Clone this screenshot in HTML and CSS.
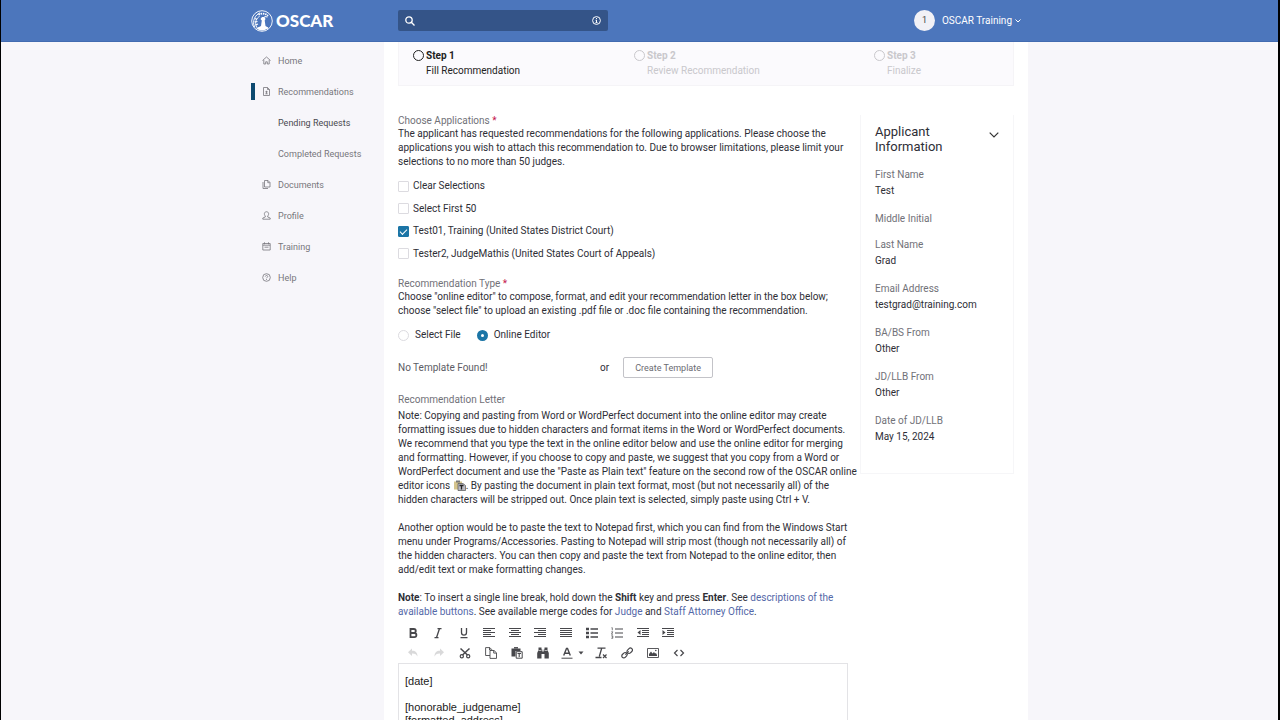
FILE: index.html
```
<!DOCTYPE html>
<html lang="en">
<head>
  <meta charset="UTF-8" />
  <title>OSCAR - Fill Recommendation</title>
  <link rel="stylesheet" href="styles.css">
</head>
<body>

<header class="topbar">
  <div class="container topbar-inner">
    <a class="logo" href="#" aria-label="OSCAR home">
      <svg width="22" height="22" viewBox="0 0 22 22" fill="none" stroke="#fff">
        <circle cx="11" cy="11" r="10.300" stroke-width=".9" />
        <path d="M3.500 17C1 11 4 5 9 2.800M5.500 17C3.500 12 5.500 8 8.500 6.500" stroke-width="1" />
        <path d="M7.500 4.800c3-2 7-1.500 9.500 1" stroke-width="1.800" stroke-dasharray="1.500 .8" />
        <path d="M4 8.500l2 1M3.500 12l3-.5M4.500 15l2.500-1M13.500 6.500l3 .5" stroke-width="1.200" />
        <path d="M9.500 9l1.500-2 2.500 0 1 2-.8 1.500.8 5.500 2.500 1.500v1.200H7v-1.200l3-1.500.8-5.500z" fill="#fff" stroke="none" />
        <path d="M4.500 17.500c4 4 9 4 13 0z" fill="#fff" stroke="none" />
      </svg>
      <span>OSCAR</span>
    </a>
    <form class="search" role="search">
      <svg width="10" height="10" viewBox="0 0 10 10" fill="none" stroke="#fff" stroke-width="1.300"><circle cx="4" cy="4" r="3.200" /><path d="M6.300 6.300L9.500 9.500" /></svg>
      <input type="search" aria-label="Search" />
      <button type="button" aria-label="Search help">
        <svg width="9" height="9" viewBox="0 0 9 9" fill="none" stroke="#fff"><circle cx="4.500" cy="4.500" r="3.900" /><path d="M4.500 4v2.800M3.600 4.200h.9M3.500 6.600h2M4.500 2v1.100" /></svg>
      </button>
    </form>
    <button class="user" type="button">
      <span class="avatar">1</span>
      <span>OSCAR Training</span>
      <svg width="6" height="4" viewBox="0 0 6 4" fill="none" stroke="#fff"><path d="M.5 .5L3 3 5.500 .5" /></svg>
    </button>
  </div>
</header>

<div class="container page">
  <nav class="sidebar" aria-label="Main">
    <a href="#"><svg viewBox="0 0 9 9"><path d="M.5 4.500l4-3.500 4 3.500M1.800 4v4h1.900V5.800h1.600V8h1.900V4" /></svg>Home</a>
    <a href="#" class="active"><svg viewBox="0 0 9 9"><path d="M1.500 .5h4l2 2v6h-6zM5.500 .5v2h2M4.500 3.800v3M3.300 4.800h2.400M3.300 6.800h2.400" /></svg>Recommendations</a>
    <a href="#" class="sub current">Pending Requests</a>
    <a href="#" class="sub">Completed Requests</a>
    <a href="#"><svg viewBox="0 0 9 9"><path d="M2.500 .5h3.500l2 2v4.500h-5.500zM5.800 .5v2.200h2M1 2v6.500h5" /></svg>Documents</a>
    <a href="#"><svg viewBox="0 0 9 9"><path d="M3.300 5C1.500 3.200 2.500 .7 4.500 .7S7.500 3.200 5.700 5v1l2.500 1v1.200H.8V7l2.500-1z" /></svg>Profile</a>
    <a href="#"><svg viewBox="0 0 9 9"><path d="M.8 1.500h7.400v6.500H.8zM.8 3.200h7.400M2.500 .3v2M6.500 .3v2M2.500 5.200h4" /></svg>Training</a>
    <a href="#"><svg viewBox="0 0 9 9"><circle cx="4.500" cy="4.500" r="3.800" /><path d="M3.300 3.600c0-1.600 2.500-1.500 2.400 0 0 .8-1.200.8-1.200 1.700M4.500 6.100v.9" /></svg>Help</a>
  </nav>

  <main>
    <ol class="steps">
      <li class="on"><strong>Step 1</strong><span>Fill Recommendation</span></li>
      <li><strong>Step 2</strong><span>Review Recommendation</span></li>
      <li><strong>Step 3</strong><span>Finalize</span></li>
    </ol>

    <div class="columns">
      <form class="recommendation">
        <h2>Choose Applications <span class="required">*</span></h2>
        <p>The applicant has requested recommendations for the following applications. Please choose the applications you wish to attach this recommendation to. Due to browser limitations, please limit your selections to no more than 50 judges.</p>
        <div class="checks">
          <label><input type="checkbox" />Clear Selections</label>
          <label><input type="checkbox" />Select First 50</label>
          <label><input type="checkbox" checked />Test01, Training (United States District Court)</label>
          <label><input type="checkbox" />Tester2, JudgeMathis (United States Court of Appeals)</label>
        </div>

        <h2>Recommendation Type <span class="required">*</span></h2>
        <p>Choose "online editor" to compose, format, and edit your recommendation letter in the box below; choose "select file" to upload an existing .pdf file or .doc file containing the recommendation.</p>
        <div class="radios">
          <label><input type="radio" name="type" />Select File</label>
          <label><input type="radio" name="type" checked />Online Editor</label>
        </div>

        <div class="template">
          <span class="none-found">No Template Found!</span>
          <span>or</span>
          <button type="button">Create Template</button>
        </div>

        <h2 id="letterLabel">Recommendation Letter</h2>
        <div class="notes">
          <p>Note: Copying and pasting from Word or WordPerfect document into the online editor may create formatting issues due to hidden characters and format items in the Word or WordPerfect documents. We recommend that you type the text in the online editor below and use the online editor for merging and formatting. However, if you choose to copy and paste, we suggest that you copy from a Word or WordPerfect document and use the "Paste as Plain text" feature on the second row of the OSCAR online editor icons <svg class="paste" width="13" height="11" viewBox="0 0 13 11"><path d="M1 1.500h8v8H1z" fill="#d5c48d" /><path d="M3 .5h4v2H3z" fill="#777" /><path d="M5 3.500h5l2.500 2v5H5z" fill="#b9b9c2" stroke="#555" stroke-width=".7" /><path d="M6.500 5.500h4M8.500 5.500v4" stroke="#222" stroke-width="1.300" /></svg>. By pasting the document in plain text format, most (but not necessarily all) of the hidden characters will be stripped out. Once plain text is selected, simply paste using Ctrl + V.</p>
          <p>Another option would be to paste the text to Notepad first, which you can find from the Windows Start menu under Programs/Accessories. Pasting to Notepad will strip most (though not necessarily all) of the hidden characters. You can then copy and paste the text from Notepad to the online editor, then add/edit text or make formatting changes.</p>
          <p><b>Note</b>: To insert a single line break, hold down the <b>Shift</b> key and press <b>Enter</b>. See <a href="#">descriptions of the available buttons</a>. See available merge codes for <a href="#">Judge</a> and <a href="#">Staff Attorney Office</a>.</p>
        </div>

        <div class="toolbar text-tools">
          <button type="button" aria-label="Bold"><svg viewBox="0 0 12 12"><path d="M3.500 2h3.300a2 2 0 010 4H3.500zM3.500 6h3.800a2 2 0 010 4.200H3.500z" stroke-width="1.800" /></svg></button>
          <button type="button" aria-label="Italic"><svg viewBox="0 0 12 12"><path d="M5.500 1.600h4M2.500 10.600h4M7.500 1.600l-3 9" stroke-width="1.400" /></svg></button>
          <button type="button" aria-label="Underline"><svg viewBox="0 0 12 12"><path d="M3.500 1v4.500c0 3.500 5 3.500 5 0V1M2.500 10.700h7" stroke-width="1.300" /></svg></button>
          <button type="button" aria-label="Align left"><svg viewBox="0 0 12 12"><path d="M0 1.500h12M0 3.500h8M0 5.500h12M0 7.500h8M0 9.500h12" /></svg></button>
          <button type="button" aria-label="Center"><svg viewBox="0 0 12 12"><path d="M0 1.500h12M2 3.500h8M0 5.500h12M2 7.500h8M0 9.500h12" /></svg></button>
          <button type="button" aria-label="Align right"><svg viewBox="0 0 12 12"><path d="M0 1.500h12M4 3.500h8M0 5.500h12M4 7.500h8M0 9.500h12" /></svg></button>
          <button type="button" aria-label="Justify"><svg viewBox="0 0 12 12"><path d="M0 1.500h12M0 3.500h12M0 5.500h12M0 7.500h12M0 9.500h12" /></svg></button>
          <button type="button" aria-label="Bulleted list"><svg viewBox="0 0 12 12"><path d="M4.500 2H12M4.500 6H12M4.500 10H12" stroke-width="1.300" /><path d="M0 2h3M0 6h3M0 10h3" stroke-width="2.600" /></svg></button>
          <button type="button" aria-label="Numbered list"><svg viewBox="0 0 12 12"><path d="M4 2h8M4 6h8M4 10h8" stroke-width="1.200" /><path d="M.5 .7h.8v2.600M.3 4.800h1.500L.4 7.200H2M.3 8.800h1.500v2.500H.3M.8 10h1" stroke-width=".7" /></svg></button>
          <button type="button" aria-label="Decrease indent"><svg viewBox="0 0 12 12"><path d="M0 1.500h12M5 3.500h7M5 5.500h7M5 7.500h7M0 9.500h12" /><path d="M3.500 3v5L.5 5.500z" class="solid" /></svg></button>
          <button type="button" aria-label="Increase indent"><svg viewBox="0 0 12 12"><path d="M0 1.500h12M5 3.500h7M5 5.500h7M5 7.500h7M0 9.500h12" /><path d="M.5 3v5l3-2.500z" class="solid" /></svg></button>
        </div>
        <div class="toolbar edit-tools">
          <button type="button" aria-label="Undo" disabled><svg viewBox="0 0 12 12"><path d="M5 1.500v2.300c3.500 0 5.500 2 5.500 5.700C9 7 7.500 6.500 5 6.600V9L1 5.200z" class="solid" /></svg></button>
          <button type="button" aria-label="Redo" disabled><svg viewBox="0 0 12 12"><path d="M7 1.500v2.300c-3.500 0-5.500 2-5.500 5.700C3 7 4.500 6.500 7 6.600V9l4-3.800z" class="solid" /></svg></button>
          <button type="button" aria-label="Cut"><svg viewBox="0 0 12 12"><path d="M1.500 1.500l7 6.500M10.500 1.500l-7 6.500" stroke-width="1.500" /><circle cx="2.800" cy="9.200" r="1.600" stroke-width="1.200" /><circle cx="9.200" cy="9.200" r="1.600" stroke-width="1.200" /></svg></button>
          <button type="button" aria-label="Copy"><svg viewBox="0 0 12 12"><path d="M5 8.500H.6V.6h4.200L7 2.800M4.500 .6V3h2" stroke-width=".9" /><path d="M5 3.500h4l2.500 2.300v5.600H5zM8.700 3.500v2.600h2.600" stroke-width=".9" /></svg></button>
          <button type="button" aria-label="Paste as plain text"><svg viewBox="0 0 12 12"><path d="M.5 1.500h9V4H4.500v5.500H.5z" class="solid" /><path d="M3 .8h4" stroke-width="1.400" /><path d="M5.200 4.700h6v6.500h-6z" /><path d="M6.500 6.500h3.500M8.200 6.500v3.500" stroke-width="1.100" /></svg></button>
          <button type="button" aria-label="Find"><svg viewBox="0 0 12 12"><path d="M1.500 .5h3v2h.8v2h1.400v-2h.8v-2h3v2.500l1.300 3V11.500H7.500V7h-3v4.500H.2V6l1.300-3z" class="solid" /><path d="M1.500 3.500h3M7.500 3.500h3" stroke="#fff" stroke-width=".6" /></svg></button>
          <button type="button" class="color" aria-label="Text color"><svg viewBox="0 0 12 12"><path d="M2.700 8.500L5.500 1.500h1l2.800 7M3.800 6.200h4.400" stroke-width="1.400" /><path d="M.5 11.200h11" /></svg><svg class="caret" viewBox="0 0 6 4"><path d="M.5 .5h5L3 3.500z" class="solid" /></svg></button>
          <button type="button" aria-label="Remove format"><svg viewBox="0 0 12 12"><path d="M2.500 1.200h8M6.700 1.200L4.300 9.500M.5 10.500h6" stroke-width="1.300" /><path d="M8 7.500l3.500 3.500M11.500 7.500L8 11" stroke-width="1.200" /></svg></button>
          <button type="button" aria-label="Link"><svg viewBox="0 0 12 12"><rect x="5.700" y="1.800" width="6" height="4" rx="2" transform="rotate(-45 8.700 3.800)" stroke-width="1.200" /><rect x=".5" y="6.200" width="6" height="4" rx="2" transform="rotate(-45 3.500 8.200)" stroke-width="1.200" /><path d="M4.300 7.700l3.400-3.400" stroke-width="1.100" /></svg></button>
          <button type="button" aria-label="Image"><svg viewBox="0 0 12 12"><path d="M.5 1.500h11v9H.5z" stroke-width=".9" /><path d="M2 9V7l2-2.500 1.500 2L7 5l1 1.500 1-.5 1 2v1z" class="solid" /><circle cx="8.800" cy="3.500" r=".8" class="solid" /></svg></button>
          <button type="button" aria-label="Source"><svg viewBox="0 0 12 12"><path d="M4.500 3L1.500 6l3 3M7.500 3l3 3-3 3" stroke-width="1.200" /></svg></button>
        </div>
        <textarea class="editor" rows="12" aria-labelledby="letterLabel">[date]

[honorable_judgename]
[formatted_address]</textarea>
      </form>

      <aside class="applicant">
        <div class="applicant-head">
          <h3>Applicant Information</h3>
          <button type="button" aria-label="Collapse"><svg width="10" height="6" viewBox="0 0 10 6" fill="none" stroke="#333" stroke-width="1.200"><path d="M.7 .7L5 5 9.300 .7" /></svg></button>
        </div>
        <dl>
          <dt>First Name</dt><dd>Test</dd>
          <dt>Middle Initial</dt><dd></dd>
          <dt>Last Name</dt><dd>Grad</dd>
          <dt>Email Address</dt><dd>testgrad@training.com</dd>
          <dt>BA/BS From</dt><dd>Other</dd>
          <dt>JD/LLB From</dt><dd>Other</dd>
          <dt>Date of JD/LLB</dt><dd>May 15, 2024</dd>
        </dl>
      </aside>
    </div>
  </main>
</div>

</body>
</html>
```
FILE: styles.css
```
*, *::before {
  box-sizing: border-box;
}
body {
  display: flex;
  flex-direction: column;
  height: 100vh;
  margin: 0;
  overflow: hidden;
  border-left: 1px solid #000;
  border-right: 2px solid #000;
  background: #f7f6fa;
  color: #2e2e36;
  font: 10px/14px Roboto, sans-serif;
}
h2, h3, p, ol, dl, dd {
  margin: 0;
  padding: 0;
}
button {
  padding: 0;
  border: none;
  background: none;
  color: inherit;
  font: inherit;
  cursor: pointer;
}
a {
  color: #5468a8;
  text-decoration: none;
}
.container {
  width: 100%;
  max-width: 777px;
  margin: 0 auto;
}

/* top bar */
.topbar {
  flex: none;
  background: #4c76bc;
  border-bottom: 1px solid #426bb0;
  color: #fff;
}
.topbar-inner {
  display: flex;
  align-items: center;
  height: 41px;
  padding-right: 7px;
}
.logo {
  display: flex;
  align-items: center;
  gap: 3px;
  width: 147px;
  color: #fff;
  font: 900 17px/20px Lato, sans-serif;
}
.search {
  display: flex;
  align-items: center;
  width: 210px;
  height: 21px;
  padding: 0 7px;
  border-radius: 2px;
  background: #345488;
}
.search input {
  flex: 1;
  min-width: 0;
  border: none;
  outline: none;
  background: none;
  color: #fff;
}
.search button {
  display: flex;
}
.user {
  display: flex;
  align-items: center;
  gap: 3px;
  margin-left: auto;
}
.avatar {
  width: 21px;
  height: 21px;
  margin-right: 4px;
  border-radius: 50%;
  background: #f1f1f6;
  color: #444;
  font-size: 9px;
  line-height: 21px;
}

/* page */
.page {
  display: flex;
  flex: 1;
  min-height: 0;
}
.sidebar {
  width: 133px;
  padding-top: 3px;
  font-size: 9px;
}
.sidebar a {
  display: flex;
  align-items: center;
  gap: 7px;
  height: 31px;
  padding-left: 11px;
  color: #77767c;
}
.sidebar svg {
  width: 9px;
  height: 9px;
  fill: none;
  stroke: #77767c;
  stroke-width: .8;
}
.sidebar .sub {
  padding-left: 27px;
}
.sidebar .current {
  color: #4a494f;
}
.sidebar .active::before {
  content: "";
  width: 4px;
  height: 17px;
  margin-left: -11px;
  background: #0d4a70;
}
main {
  flex: 1;
  min-width: 0;
  padding: 0 14px;
  overflow: hidden;
  background: #fff;
}

/* steps */
.steps {
  display: grid;
  grid-template-columns: 221px 240px 1fr;
  height: 44px;
  padding-top: 6px;
  border: 1px solid #f5f4f7;
  border-top: none;
  background: #fbfafd;
  list-style: none;
}
.steps li {
  position: relative;
  padding-left: 27px;
  color: #c9c8cc;
}
.steps li::before {
  content: "";
  position: absolute;
  top: 2px;
  left: 14px;
  width: 11px;
  height: 11px;
  border: 1px solid #c9c8cc;
  border-radius: 50%;
}
.steps strong, .steps span {
  display: block;
  line-height: 15px;
}
.steps .on {
  color: #222;
}
.steps .on::before {
  border-color: #222;
}

/* form */
.columns {
  display: flex;
  align-items: flex-start;
  gap: 12px;
  padding-top: 29px;
}
.recommendation {
  flex: 1;
  min-width: 0;
}
.recommendation h2 {
  color: #717178;
  font-size: 10px;
  font-weight: 400;
  line-height: 12px;
}
.required {
  color: #c4164c;
}
.checks {
  display: grid;
  height: 90px;
  margin: 6px 0 13px;
}
.checks label, .radios label {
  display: flex;
  align-items: center;
}
.checks label {
  gap: 4px;
}
.radios {
  display: flex;
  gap: 16px;
  margin: 10px 0 15px;
}
.radios label {
  gap: 6px;
}
input[type="checkbox"], input[type="radio"] {
  appearance: none;
  width: 11px;
  height: 11px;
  margin: 0;
  border: 1px solid #dcdbe0;
  border-radius: 1px;
  background: #fff;
}
input[type="radio"] {
  border-radius: 50%;
}
input[type="checkbox"]:checked {
  display: grid;
  border-color: #1b75a6;
  background: #1b75a6;
}
input[type="checkbox"]:checked::before {
  content: "";
  width: 7px;
  height: 4px;
  margin: 2px 0 0 1px;
  border: solid #fff;
  border-width: 0 0 1px 1px;
  transform: rotate(-45deg);
}
input[type="radio"]:checked {
  border: 4px solid #1b75a6;
}
.template {
  display: flex;
  align-items: center;
  margin-bottom: 16px;
}
.none-found {
  width: 202px;
  color: #5c5c64;
}
.template button {
  width: 90px;
  height: 21px;
  margin-left: 14px;
  border: 1px solid #c3c3c8;
  border-radius: 2px;
  color: #6b6b72;
  font-size: 9px;
}
.notes {
  display: grid;
  gap: 14px;
  margin: 3px -10px 4px 0;
}
.paste {
  vertical-align: -2px;
}

/* editor */
.toolbar {
  height: 20px;
  margin-left: 2px;
}
.toolbar button {
  display: flex;
  align-items: center;
  justify-content: center;
}
.toolbar svg {
  width: 12px;
  height: 12px;
  fill: none;
  stroke: #47474b;
}
.toolbar .solid {
  fill: #47474b;
  stroke: none;
}
.toolbar button:disabled {
  opacity: .2;
}
.text-tools {
  display: grid;
  grid-template-columns: repeat(11, 1fr);
  width: 281px;
}
.edit-tools {
  display: flex;
}
.edit-tools button {
  width: 26px;
}
.edit-tools .color {
  gap: 5px;
  width: 32px;
}
.toolbar .caret {
  width: 6px;
  height: 4px;
}
.editor {
  display: block;
  width: 100%;
  padding: 11px 6px;
  border: 1px solid #e3e3e6;
  outline: none;
  resize: none;
  color: #222;
  font: 11px/13px "Liberation Sans", sans-serif;
}

/* applicant card */
.applicant {
  width: 154px;
  padding: 9px 14px 16px;
  border: 1px solid #f6f6f8;
  border-top: none;
}
.applicant-head {
  display: flex;
  justify-content: space-between;
  align-items: flex-start;
  margin-bottom: 13px;
}
.applicant h3 {
  width: 90px;
  font-size: 13px;
  font-weight: 400;
  line-height: 15px;
}
.applicant-head button {
  display: flex;
  padding: 8px 0;
}
.applicant dt, .applicant dd {
  line-height: 16px;
}
.applicant dt {
  color: #717178;
}
.applicant dd {
  margin-bottom: 12px;
}
.applicant dd:empty {
  margin-bottom: 10px;
}
```
